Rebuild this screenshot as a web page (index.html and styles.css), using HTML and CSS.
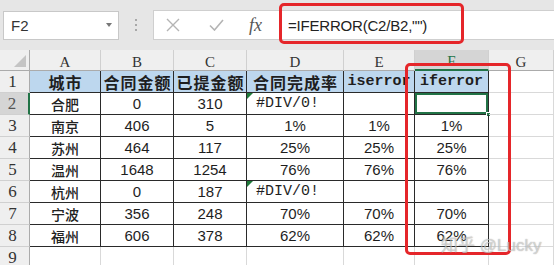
FILE: index.html
```html
<!DOCTYPE html>
<html lang="zh-CN">
<head>
<meta charset="utf-8">
<link rel="stylesheet" href="styles.css">
</head>
<body>
<div class="app">
  <div class="fbar">
    <div class="namebox"><span class="nb-text">F2</span><span class="nb-arrow"></span></div>
    <div class="grip"><i></i><i></i><i></i></div>
    <div class="fbox">
      <svg class="ico ico-x" width="14" height="14" viewBox="0 0 14 14"><path d="M1 1L13 13M13 1L1 13" stroke="#b4b4b4" stroke-width="1.4" fill="none"/></svg>
      <svg class="ico ico-ok" width="15" height="12" viewBox="0 0 15 12"><path d="M1 6.5L5.5 11L14 1" stroke="#b4b4b4" stroke-width="1.6" fill="none"/></svg>
      <span class="fx">fx</span>
      <span class="formula">=IFERROR(C2/B2,"")</span>
    </div>
  </div>
  <div class="sheet">
    <div class="ch corner"><span class="tri"></span></div>
    <div class="ch">A</div><div class="ch">B</div><div class="ch">C</div><div class="ch">D</div><div class="ch">E</div><div class="ch sel-col">F</div><div class="ch">G</div>

    <div class="rh">1</div>
    <div class="c t hd cjk">城市</div><div class="c t hd cjk">合同金额</div><div class="c t hd cjk">已提金额</div><div class="c t hd cjk">合同完成率</div><div class="c t hd mono">iserror</div><div class="c t hd mono">iferror</div><div class="c"></div>

    <div class="rh sel-row">2</div>
    <div class="c t cjkd">合肥</div><div class="c t num">0</div><div class="c t num">310</div><div class="c t err"><span class="etri"></span>#DIV/0!</div><div class="c t"></div><div class="c t active"><span class="handle"></span></div><div class="c"></div>

    <div class="rh">3</div>
    <div class="c t cjkd">南京</div><div class="c t num">406</div><div class="c t num">5</div><div class="c t num">1%</div><div class="c t num">1%</div><div class="c t num">1%</div><div class="c"></div>

    <div class="rh">4</div>
    <div class="c t cjkd">苏州</div><div class="c t num">464</div><div class="c t num">117</div><div class="c t num">25%</div><div class="c t num">25%</div><div class="c t num">25%</div><div class="c"></div>

    <div class="rh">5</div>
    <div class="c t cjkd">温州</div><div class="c t num">1648</div><div class="c t num">1254</div><div class="c t num">76%</div><div class="c t num">76%</div><div class="c t num">76%</div><div class="c"></div>

    <div class="rh">6</div>
    <div class="c t cjkd">杭州</div><div class="c t num">0</div><div class="c t num">187</div><div class="c t err"><span class="etri"></span>#DIV/0!</div><div class="c t"></div><div class="c t"></div><div class="c"></div>

    <div class="rh">7</div>
    <div class="c t cjkd">宁波</div><div class="c t num">356</div><div class="c t num">248</div><div class="c t num">70%</div><div class="c t num">70%</div><div class="c t num">70%</div><div class="c"></div>

    <div class="rh">8</div>
    <div class="c t cjkd">福州</div><div class="c t num">606</div><div class="c t num">378</div><div class="c t num">62%</div><div class="c t num">62%</div><div class="c t num">62%</div><div class="c"></div>

    <div class="rh">9</div>
    <div class="c"></div><div class="c"></div><div class="c"></div><div class="c"></div><div class="c"></div><div class="c"></div><div class="c"></div>
  </div>
  <div class="mark mark-formula"></div>
  <div class="mark mark-col"></div>
  <div class="watermark">知乎 @Lucky</div>
</div>
</body>
</html>
```

FILE: styles.css
```css
* { box-sizing: border-box; }
html, body { margin: 0; padding: 0; }
body {
  width: 554px;
  height: 265px;
  overflow: hidden;
  background: #e6e6e6;
  font-family: "Liberation Sans", "Noto Sans CJK SC", sans-serif;
  color: #1e1e1e;
}
.app { position: relative; width: 554px; height: 265px; overflow: hidden; }

.fbar {
  height: 50px;
  display: flex;
  align-items: center;
  padding-left: 3px;
}
.namebox {
  width: 116px;
  height: 29px;
  background: #fff;
  border: 1px solid #c8c8c8;
  display: flex;
  align-items: center;
  justify-content: space-between;
  padding: 0 6px 0 7px;
}
.nb-text { font-size: 15px; color: #333; }
.nb-arrow {
  width: 0; height: 0;
  border-left: 3px solid transparent;
  border-right: 3px solid transparent;
  border-top: 4px solid #777;
}
.grip {
  width: 34px;
  display: flex;
  flex-direction: column;
  align-items: center;
  gap: 3px;
}
.grip i { display: block; width: 2px; height: 2px; background: #a8a8a8; }
.fbox {
  flex: 1;
  height: 30px;
  background: #fff;
  border: 1px solid #cfcfcf;
  border-right: none;
  display: flex;
  align-items: center;
  padding-left: 12px;
}
.ico-x { margin-right: 29px; }
.ico-ok { margin-right: 25px; }
.fx {
  font-family: "Liberation Serif", serif;
  font-style: italic;
  font-size: 18px;
  color: #555;
  margin-right: 26px;
}
.formula { font-size: 15px; color: #222; letter-spacing: -0.2px; }

.sheet {
  display: grid;
  grid-template-columns: 30px 71px 73px 73px 97px 71px 74px 65px;
  grid-template-rows: 21px repeat(9, 22px);
  background: #fff;
}
.ch {
  background: #efefef;
  border-right: 1px solid #d0d0d0;
  border-bottom: 1px solid #ababab;
  display: flex;
  align-items: center;
  justify-content: center;
  padding-top: 4px;
  font-family: "Liberation Serif", serif;
  font-size: 15px;
  color: #333;
}
.corner { position: relative; border-right-color: #ababab; }
.tri {
  position: absolute;
  right: 3px; bottom: 3px;
  width: 0; height: 0;
  border-left: 12px solid transparent;
  border-bottom: 12px solid #c4c4c4;
}
.sel-col {
  background: #d5d5d5;
  border-bottom: 2px solid #217346;
  color: #217346;
}
.rh {
  background: #efefef;
  border-right: 1px solid #ababab;
  border-bottom: 1px solid #d0d0d0;
  display: flex;
  align-items: center;
  justify-content: center;
  padding-right: 4px;
  font-family: "Liberation Serif", serif;
  font-size: 17px;
  color: #333;
}
.sel-row {
  background: #d5d5d5;
  border-right: 2px solid #217346;
  color: #555;
}
.c {
  border-right: 1px solid #d9d9d9;
  border-bottom: 1px solid #d9d9d9;
  display: flex;
  align-items: center;
  justify-content: center;
  white-space: nowrap;
  overflow: hidden;
  position: relative;
}
.c.t { border-right-color: #2a2a2a; border-bottom-color: #2a2a2a; }
.hd {
  background: #bdd7ee;
  font-weight: bold;
}
.cjk { font-family: "Noto Sans CJK SC", sans-serif; font-size: 16px; letter-spacing: 1px; padding-left: 1px; }
.mono { font-family: "Liberation Mono", monospace; font-size: 15px; }
.cjkd { font-family: "Noto Sans CJK JP", "Noto Sans CJK SC", sans-serif; font-size: 14px; font-weight: 500; color: #222; }
.num { font-size: 15px; }
.err {
  justify-content: flex-start;
  padding-left: 9px;
  font-family: "Liberation Mono", monospace;
  font-size: 15px;
}
.etri {
  position: absolute;
  left: 0; top: 0;
  width: 0; height: 0;
  border-right: 6px solid transparent;
  border-top: 6px solid #1f7a3a;
}
.active {
  overflow: visible;
  box-shadow: inset 0 0 0 2px #217346;
}
.handle {
  position: absolute;
  right: -3px; bottom: -3px;
  width: 5px; height: 5px;
  background: #217346;
  border: 1px solid #fff;
}

.mark {
  position: absolute;
  border: 3px solid #e5262a;
  border-radius: 5px;
  pointer-events: none;
}
.mark-formula { left: 279px; top: 3px; width: 185px; height: 41px; }
.mark-col { left: 405px; top: 63px; width: 106px; height: 192px; }

.watermark {
  position: absolute;
  left: 441px;
  top: 231px;
  font-family: "Liberation Sans", "Noto Sans CJK SC", sans-serif;
  font-size: 17px;
  color: rgba(255, 255, 255, 0.5);
  text-shadow: 0 0 1px rgba(70, 70, 70, 0.6);
  white-space: nowrap;
}
```
